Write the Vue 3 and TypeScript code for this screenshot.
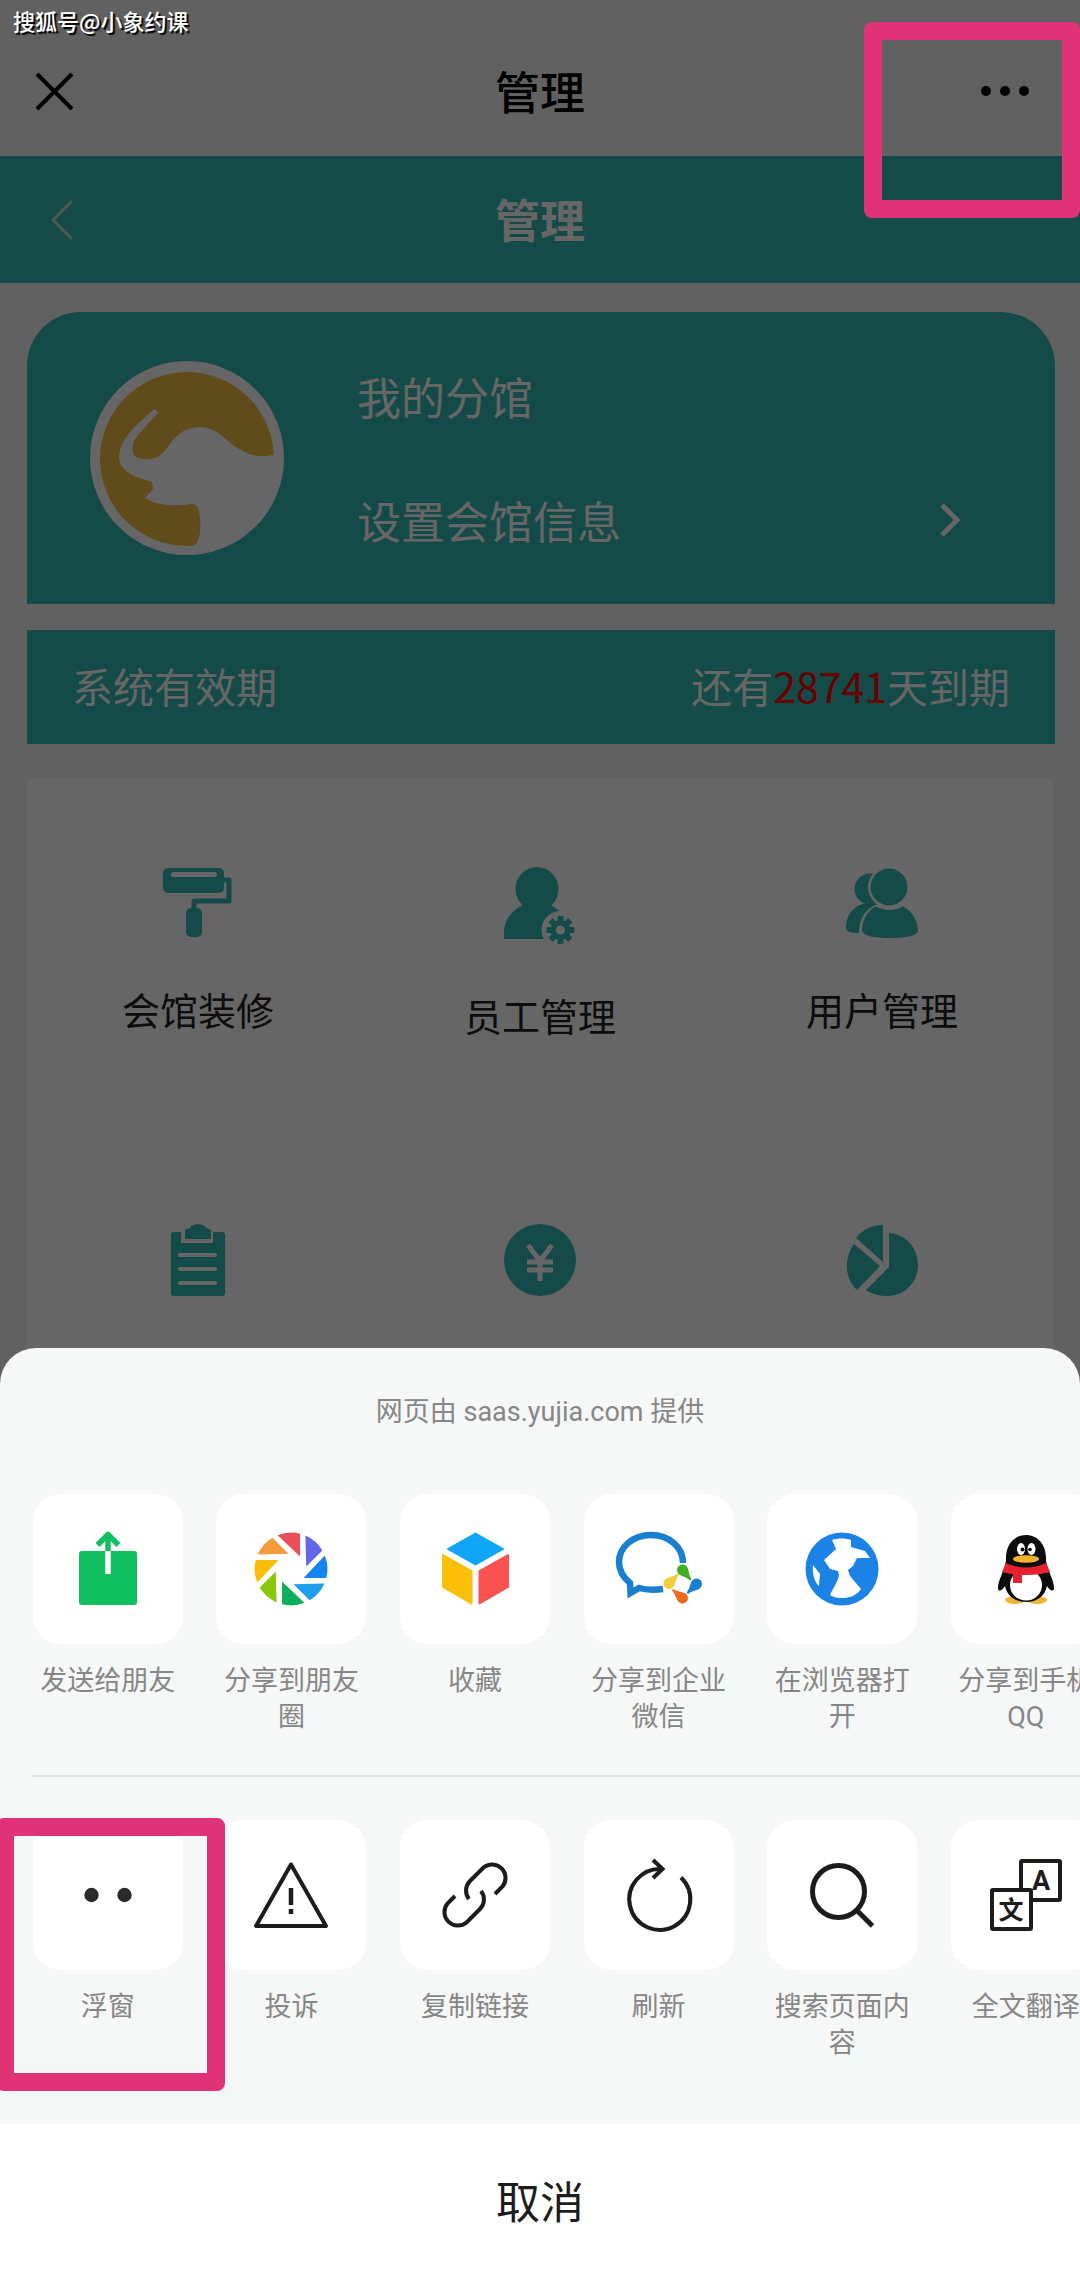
<script setup lang="ts">
interface Entry {
  label: string
  icon: string
}

interface Tool extends Entry {
  width: number
  height: number
  showLabel: boolean
}

const bladeColors: string[] = ['#ea505a', '#6467e8', '#1485ee', '#1ba0ee', '#0fae5c', '#8ac90a', '#fbbd08', '#f79a3e']
const blades: string = bladeColors
  .map((c, i) => `<path fill="${c}" transform="translate(38 38) rotate(${i * 45})" d="M-13.4-33.8A36.4 36.4 0 0 1 9-35.3V-12.5Z"/>`)
  .join('')

const drops: string = [
  [61.5, 39, 50, '#3fae1f'],
  [75.5, 53, 135, '#1a7fd0'],
  [61.5, 67, 220, '#ea6a20'],
  [48, 52.5, -45, '#f5cc3a'],
]
  .map(
    ([x, y, angle, color]) =>
      `<path fill="${color}" transform="translate(${x} ${y}) rotate(${angle})" d="M0-5.500A5.500 5.500 0 1 0 0 5.500C5 5 7 1.500 13 1V-1C7-1.500 5-5 0-5.500Z"/>`,
  )
  .join('')

const gearTeeth: string = [0, 45, 90, 135]
  .map((a) => `<rect x="-3" y="-14" width="6" height="28" rx="1" transform="translate(56.5 63) rotate(${a})"/>`)
  .join('')

const tools: Tool[] = [
  {
    label: '会馆装修',
    width: 70,
    height: 71,
    showLabel: true,
    icon: '<rect x="0" y="1" width="61" height="25" rx="5"/><rect x="8" y="5" width="46" height="5" rx="2" fill="#fff"/><path d="M60 13H66V34H31V43" fill="none" stroke="#32bbb4" stroke-width="5" stroke-linejoin="round"/><rect x="23" y="41" width="16" height="29" rx="5"/>',
  },
  {
    label: '员工管理',
    width: 72,
    height: 77,
    showLabel: true,
    icon: `<ellipse cx="33" cy="22" rx="21.500" ry="22"/><path d="M19 38C8 43 0 53 0 65V72H60V47L47 38Z"/><circle cx="56.500" cy="63" r="19" fill="#fff"/>${gearTeeth}<circle cx="56.500" cy="63" r="10"/><circle cx="56.500" cy="63" r="4.500" fill="#fff"/>`,
  },
  {
    label: '用户管理',
    width: 72,
    height: 71,
    showLabel: true,
    icon: '<circle cx="24" cy="22" r="15.500"/><path d="M0 61C0 48 7 40 17 37H34V66H12C5 66 0 65 0 61Z"/><circle cx="43" cy="20" r="21" fill="#fff"/><path d="M13 66C13 48 24 38 34 37H52L60 71H14Z" fill="#fff"/><circle cx="43" cy="20" r="18.500"/><path d="M16 64C16 51 23 43 30 39.500C39 44 48 44 57 39.500C65 43 72 53 72 64C70 69 60 71 44 71S18 69 16 64Z"/>',
  },
  {
    label: '课程管理',
    width: 56,
    height: 72,
    showLabel: false,
    icon: '<rect x="1" y="8" width="54" height="64" rx="3"/><path d="M11 6H43V19H11Z" fill="#fff"/><path d="M15 15V7C15 5 18 5 20 4C22-1 34-1 36 4C38 5 41 5 41 7V15Z"/><path d="M10 31H45M10 45H45M10 59H45" stroke="#fff" stroke-width="4" stroke-linecap="round"/>',
  },
  {
    label: '财务管理',
    width: 72,
    height: 72,
    showLabel: false,
    icon: '<circle cx="36" cy="36" r="36"/><path d="M24 21L36 37L48 21M23 38H49M23 46H49M36 37V57" fill="none" stroke="#fff" stroke-width="5"/>',
  },
  {
    label: '数据统计',
    width: 72,
    height: 72,
    showLabel: false,
    icon: '<path d="M37 1V38L10 14C17 5 26 1 37 1Z"/><path d="M8 20L34 42L11 66C-2 54-2 34 8 20Z"/><path d="M43 9C59 10 72 23 72 41C72 58 59 72 41 72C33 72 26 70 20 66L43 43Z"/>',
  },
]

const shareActions: Entry[] = [
  {
    label: '发送给朋友',
    icon: '<rect x="9" y="20" width="58" height="54" rx="3" fill="#0fbf60"/><path d="M38 4V20M27.500 14L38 3.500L48.500 14" fill="none" stroke="#0fbf60" stroke-width="5.500" stroke-linejoin="round"/><path d="M38 20V43" stroke="#fff" stroke-width="5.500"/>',
  },
  { label: '分享到朋友圈', icon: blades },
  {
    label: '收藏',
    icon: '<g stroke-width="2" stroke-linejoin="round"><path d="M38.500 2.500L66 18L38.500 33.500L11 18Z" fill="#10a6f8" stroke="#10a6f8"/><path d="M6 24L34.500 40V72.500L6 56Z" fill="#fcbf08" stroke="#fcbf08"/><path d="M71 24L42.500 40V72.500L71 56Z" fill="#fa5151" stroke="#fa5151"/></g>',
  },
  {
    label: '分享到企业微信',
    icon: `<path d="M62 32C62 16 48 4 30 4S-2 16-2 31C-2 41 3 47 9 52L9.500 62L18 57C25 59 33 59 42 58" fill="none" stroke="#1a7fd0" stroke-width="6.500"/>${drops}`,
  },
  {
    label: '在浏览器打开',
    icon: '<circle cx="38" cy="38" r="36.500" fill="#1b82e6"/><path d="M28 9C34 7 42 7 47 9V16L61 20L66 27L53 27L49 35L44 39L46 45L57 58C52 65 45 67 38 67S30 66 26 64C29 57 34 51 35 44L34 40L26 38L20 29L32 18ZM9 34L16 43L15 55C11 52 8 43 9 34Z" fill="#fff"/>',
  },
  {
    label: '分享到手机QQ',
    icon: '<ellipse cx="27" cy="69" rx="10" ry="4" fill="#efb634"/><ellipse cx="49" cy="69" rx="10" ry="4" fill="#efb634"/><path d="M18 30C17 14 26 4 38 4S59 14 58 30C60 41 66 49 66 57C66 62 61 59 59 55C57 65 49 71 38 71S19 65 17 55C15 59 10 62 10 57C10 49 16 41 18 30Z" fill="#0c0c0c"/><ellipse cx="38" cy="54" rx="16" ry="15.500" fill="#fff"/><path d="M18 32C31 38 45 38 58 32L62 41C48 45 30 45 14 41Z" fill="#e6212f"/><path d="M25 41H34V52H25Z" fill="#e6212f"/><ellipse cx="33" cy="18" rx="4" ry="6" fill="#fff"/><ellipse cx="43.500" cy="18" rx="4" ry="6" fill="#fff"/><circle cx="34.500" cy="18.500" r="2" fill="#0c0c0c"/><circle cx="42" cy="18.500" r="1.800" fill="#0c0c0c"/><ellipse cx="38" cy="28" rx="13" ry="3.800" fill="#f5b32c"/>',
  },
]

const pageActions: Entry[] = [
  { label: '浮窗', icon: '<circle cx="21.500" cy="38" r="7.200" fill="#2b2b2b"/><circle cx="54.500" cy="38" r="7.200" fill="#2b2b2b"/>' },
  {
    label: '投诉',
    icon: '<path d="M38 7.500L73 69H3Z" fill="none" stroke="#1c1c1c" stroke-width="4" stroke-linejoin="round"/><path d="M38 31V48M38 52V57" stroke="#1c1c1c" stroke-width="4.500"/>',
  },
  {
    label: '复制链接',
    icon: '<g fill="none" stroke="#1c1c1c" stroke-width="4"><path d="M58 37L65.500 29.500A13.500 13.500 0 0 0 46.500 10.500L33 24A13.500 13.500 0 0 0 32 42"/><path transform="rotate(180 38 38)" d="M58 37L65.500 29.500A13.500 13.500 0 0 0 46.500 10.500L33 24A13.500 13.500 0 0 0 32 42"/></g>',
  },
  {
    label: '刷新',
    icon: '<path d="M60 20.500A30.500 30.500 0 1 1 41 12M32 3L41.500 12L32 21" fill="none" stroke="#1c1c1c" stroke-width="4"/>',
  },
  {
    label: '搜索页面内容',
    icon: '<circle cx="34.500" cy="34.500" r="26" fill="none" stroke="#1c1c1c" stroke-width="5"/><path d="M52.500 53L68.500 69" stroke="#1c1c1c" stroke-width="5"/>',
  },
  {
    label: '全文翻译',
    icon: '<g fill="#fff" stroke="#1c1c1c" stroke-width="4" stroke-linejoin="round"><rect x="33" y="4" width="39" height="39" rx="1"/><rect x="4" y="33" width="39" height="39" rx="1"/></g><g fill="#1c1c1c" text-anchor="middle" font-weight="700" font-family="Roboto, \'Noto Sans CJK SC\', sans-serif"><text x="53" y="33" font-size="27">A</text><text x="23" y="62" font-size="25">文</text></g>',
  },
]
</script>

<template>
  <div class="screen">
    <main class="page">
      <header class="browser-bar">
        <button class="icon-button" aria-label="关闭">
          <svg width="38" height="38" viewBox="0 0 38 38"><path d="M1 1L36 36M36 1L1 36" stroke="#000" stroke-width="4" /></svg>
        </button>
        <h1 class="bar-title">管理</h1>
        <button class="icon-button more" aria-label="更多">
          <svg width="50" height="12" viewBox="0 0 50 12">
            <circle cx="6" cy="5" r="5" /><circle cx="25" cy="5" r="5" /><circle cx="44" cy="5" r="5" />
          </svg>
        </button>
      </header>

      <nav class="app-bar">
        <button class="icon-button back" aria-label="返回">
          <svg width="24" height="42" viewBox="0 0 24 42"><path d="M22 2L3 21L22 40" fill="none" stroke="#c8dedc" stroke-width="3" /></svg>
        </button>
        <h2 class="bar-title light">管理</h2>
      </nav>

      <section class="club">
        <svg class="avatar" width="194" height="194" viewBox="0 0 194 194">
          <circle cx="97" cy="97" r="97" fill="#fff" />
          <circle cx="97" cy="98" r="87" fill="#edbe41" />
          <path
            fill="#fff"
            d="M62 50L65 48L68 52C58 63 50 70 44 80C42 86 42 91 45 95C50 99 61 99 67 96C78 91 82 74 96 69C105 65 118 65 127 71C136 77 141 84 151 89C160 94 168 97 183 94L191 97C191 145 150 191 103 185C112 182 111 160 109 150C108 145 105 143 102 143C90 145 68 146 55 137L63 128L62 121L56 119C40 116 29 106 29 96C30 77 46 65 62 50Z"
          />
        </svg>
        <div class="club-info">
          <p>我的分馆</p>
          <a class="club-link" href="#">
            设置会馆信息
            <svg width="22" height="34" viewBox="0 0 22 34"><path d="M3 2L18 17L3 32" fill="none" stroke="#fff" stroke-width="5" /></svg>
          </a>
        </div>
      </section>

      <section class="validity">
        <span>系统有效期</span>
        <span>还有<b>28741</b>天到期</span>
      </section>

      <section class="tools">
        <button v-for="tool in tools" :key="tool.label" class="tool" :aria-label="tool.label">
          <svg :width="tool.width" :height="tool.height" :viewBox="`0 0 ${tool.width} ${tool.height}`" fill="#32bbb4" v-html="tool.icon" />
          <span v-if="tool.showLabel">{{ tool.label }}</span>
        </button>
      </section>
    </main>

    <div class="mask"></div>
    <p class="watermark">搜狐号@小象约课</p>
    <div class="marker marker-more"></div>

    <section class="sheet" role="dialog" aria-label="更多操作">
      <p class="source">网页由 saas.yujia.com 提供</p>
      <div class="actions">
        <button v-for="item in shareActions" :key="item.label" class="action">
          <span class="tile"><svg width="76" height="76" viewBox="0 0 76 76" v-html="item.icon" /></span>
          <span class="caption">{{ item.label }}</span>
        </button>
      </div>
      <hr class="divider" />
      <div class="page-actions">
        <div class="actions">
          <button v-for="item in pageActions" :key="item.label" class="action">
            <span class="tile"><svg width="76" height="76" viewBox="0 0 76 76" v-html="item.icon" /></span>
            <span class="caption">{{ item.label }}</span>
          </button>
        </div>
        <div class="marker marker-float"></div>
      </div>
      <button class="cancel">取消</button>
    </section>
  </div>
</template>

<style>
body {
  margin: 0;
}
</style>

<style scoped>
.screen {
  position: relative;
  display: grid;
  grid-template-columns: minmax(0, 1fr);
  min-height: 100vh;
  overflow: hidden;
  background: #f3f3f3;
  font-family: 'Noto Sans CJK SC', sans-serif;
}

.screen p,
.screen h1,
.screen h2 {
  margin: 0;
}

button {
  padding: 0;
  border: 0;
  background: none;
  color: inherit;
  font: inherit;
  cursor: pointer;
}

svg {
  display: block;
  flex: none;
  overflow: visible;
}

.page {
  grid-area: 1 / 1;
}

.browser-bar,
.app-bar {
  display: grid;
  grid-template-columns: 1fr auto 1fr;
  align-items: center;
  padding: 0 36px;
}

.browser-bar {
  height: 128px;
  padding-top: 28px;
}

.app-bar {
  height: 127px;
  background: #32bbb4;
}

.icon-button {
  justify-self: start;
}

.more {
  justify-self: end;
  padding-right: 14px;
}

.back {
  padding-left: 14px;
}

.bar-title {
  padding-bottom: 2px;
  font-size: 45px;
  line-height: 60px;
  font-weight: 500;
}

.light {
  color: #fff;
  font-weight: 700;
}

.club {
  display: flex;
  align-items: center;
  gap: 73px;
  box-sizing: border-box;
  height: 292px;
  margin: 29px 25px 0 27px;
  padding: 0 94px 0 63px;
  border-radius: 54px 54px 0 0;
  background: #32bbb4;
  color: #fff;
  font-size: 44px;
  line-height: 64px;
}

.club-info {
  display: flex;
  flex: 1;
  flex-direction: column;
  gap: 60px;
}

.club-link {
  display: flex;
  align-items: center;
  justify-content: space-between;
  color: inherit;
  text-decoration: none;
}

.validity {
  display: flex;
  align-items: center;
  justify-content: space-between;
  box-sizing: border-box;
  height: 114px;
  margin: 26px 25px 0 27px;
  padding: 0 45px 4px;
  background: #32bbb4;
  color: #fff;
  font-size: 41px;
}

.validity b {
  color: #f00;
  font-weight: 400;
}

.tools {
  display: grid;
  grid-template-columns: repeat(3, 1fr);
  margin: 35px 27px 0;
  background: #fff;
}

.tool {
  display: flex;
  flex-direction: column;
  align-items: center;
  gap: 44px;
  padding: 88px 0 94px;
  color: #222;
  font-size: 38px;
  line-height: 54px;
}

.mask {
  position: absolute;
  inset: 0;
  background: rgba(0, 0, 0, 0.6);
}

.watermark {
  position: absolute;
  top: 4px;
  left: 13px;
  color: #fff;
  font-size: 22px;
  line-height: 32px;
  font-weight: 500;
  text-shadow: 2px 2px 1px #000;
}

.marker {
  position: absolute;
  box-sizing: border-box;
  border: 18px solid #e03377;
  border-radius: 8px;
  pointer-events: none;
}

.marker-more {
  top: 22px;
  right: 0;
  width: 216px;
  height: 196px;
}

.marker-float {
  top: 41px;
  left: -4px;
  width: 229px;
  height: 273px;
}

.sheet {
  position: relative;
  grid-area: 1 / 1;
  align-self: end;
  border-radius: 36px 36px 0 0;
  overflow: hidden;
  background: #f6f7f7;
  color: #868686;
  font-family: Roboto, 'Noto Sans CJK SC', sans-serif;
  font-size: 27px;
  line-height: 36px;
}

.source {
  padding: 46px 0 64px;
  text-align: center;
}

.actions {
  display: flex;
  padding-left: 16px;
  overflow: hidden;
}

.action {
  display: flex;
  flex: 0 0 17vw;
  flex-direction: column;
  align-items: center;
  gap: 19px;
}

.tile {
  display: flex;
  align-items: center;
  justify-content: center;
  width: 150px;
  height: 150px;
  border-radius: 28px;
  background: #fff;
}

.caption {
  width: 150px;
  text-align: center;
}

.divider {
  height: 2px;
  margin: 40px 0 0 32px;
  border: 0;
  background: #dfe0e0;
}

.page-actions {
  position: relative;
  padding: 43px 0 63px;
}

.cancel {
  display: block;
  width: 100%;
  padding: 48px 0 40px;
  background: #fff;
  color: #1c1c1c;
  font-size: 44px;
  line-height: 64px;
}
</style>
